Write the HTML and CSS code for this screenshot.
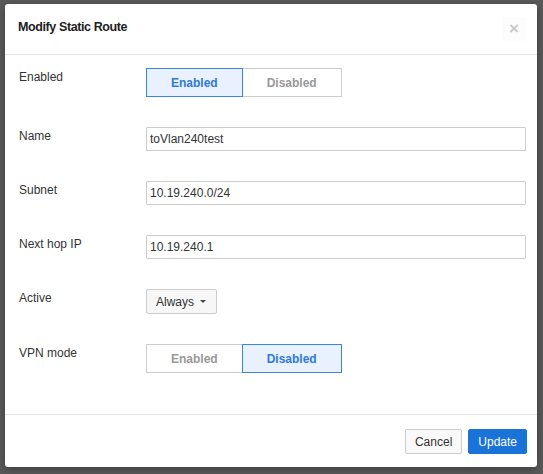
FILE: index.html
```html
<!DOCTYPE html>
<html lang="en">
<head>
    <meta charset="UTF-8">
    <meta name="viewport" content="width=device-width, initial-scale=1.0">
    <title>Modify Static Route</title>
    <link rel="stylesheet" href="styles.css">
</head>
<body>

<div class="modal">
    <div class="modal-header">
        <h4 class="modal-title">Modify Static Route</h4>
        <button class="close">&times;</button>
    </div>

    <div class="modal-body">
        <!-- Enabled -->
        <div class="form-row">
            <label class="form-label">Enabled</label>
            <div class="toggle-group">
                <button class="toggle active">Enabled</button>
                <button class="toggle">Disabled</button>
            </div>
        </div>

        <div class="form-row">
            <label class="form-label">Name</label>
            <input class="form-input" type="text" value="toVlan240test">
        </div>

        <div class="form-row">
            <label class="form-label">Subnet</label>
            <input class="form-input" type="text" value="10.19.240.0/24">
        </div>

        <div class="form-row">
            <label class="form-label">Next hop IP</label>
            <input class="form-input" type="text" value="10.19.240.1">
        </div>

        <div class="form-row">
            <label class="form-label">Active</label>
            <button class="dropdown">Always <span class="caret"></span></button>
        </div>

        <!-- VPN mode -->
        <div class="form-row">
            <label class="form-label">VPN mode</label>
            <div class="toggle-group">
                <button class="toggle">Enabled</button>
                <button class="toggle active">Disabled</button>
            </div>
        </div>
    </div>

    <div class="modal-footer">
        <button class="btn">Cancel</button>
        <button class="btn btn-primary">Update</button>
    </div>
</div>

</body>
</html>
```

FILE: styles.css
```css
body {
    margin: 0;
    padding: 0;
    background-color: #5a5a5a;
    font-family: 'Liberation Sans', Arial, sans-serif;
    color: #333;
    height: 474px;
    overflow: hidden;
}
.modal {
    margin: 4px 0 0 5px;
    width: 532px;
    height: 463px;
    background-color: #fff;
    border-radius: 3px;
    box-shadow: 0 2px 8px rgba(0, 0, 0, 0.35);
}
.modal-header {
    height: 51px;
    box-sizing: border-box;
    border-bottom: 1px solid #e4e4e4;
    display: flex;
    justify-content: space-between;
    align-items: flex-start;
    padding: 0 11px 0 13px;
}
.modal-title {
    margin: 0;
    padding-top: 16px;
    font-family: 'Liberation Sans', sans-serif;
    font-size: 12.5px;
    font-weight: 700;
    letter-spacing: -0.4px;
    color: #222;
}
.close {
    margin-top: 13px;
    width: 24px;
    height: 24px;
    border: none;
    border-radius: 2px;
    background-color: #fcfcfc;
    color: #c8c8c8;
    font-size: 17px;
    font-weight: 700;
    line-height: 24px;
    padding: 0;
    font-family: 'Liberation Sans', sans-serif;
}
.modal-body {
    height: 360px;
    box-sizing: border-box;
    display: flex;
    flex-direction: column;
    gap: 30px;
    padding: 13px 11px 0 14px;
    border-bottom: 1px solid #e4e4e4;
}
.form-row {
    display: flex;
    align-items: flex-start;
}
.form-label {
    width: 127px;
    flex-shrink: 0;
    font-size: 12px;
    line-height: 18px;
    color: #333;
}
.form-input {
    flex: 1;
    height: 24px;
    box-sizing: border-box;
    border: 1px solid #ccc;
    border-radius: 1px;
    padding: 0 3px;
    font-family: 'Liberation Sans', sans-serif;
    font-size: 12px;
    color: #333;
    outline: none;
}
.toggle-group {
    display: flex;
}
.toggle {
    height: 29px;
    box-sizing: border-box;
    border: 1px solid #ccc;
    background-color: #fff;
    color: #999;
    font-family: 'Liberation Sans', sans-serif;
    font-size: 12px;
    font-weight: 700;
    padding: 0 24px;
}
.toggle + .toggle {
    margin-left: -1px;
}
.toggle.active {
    border-color: #3d86e0;
    background-color: #e8f1fd;
    color: #2f7ad8;
    position: relative;
}
.dropdown {
    height: 25px;
    box-sizing: border-box;
    border: 1px solid #ccc;
    border-radius: 2px;
    background-color: #f7f7f7;
    font-family: 'Liberation Sans', sans-serif;
    font-size: 12px;
    color: #333;
    padding: 0 10px 0 9px;
    display: flex;
    align-items: center;
    gap: 6px;
}
.caret {
    width: 0;
    height: 0;
    border-left: 3px solid transparent;
    border-right: 3px solid transparent;
    border-top: 3px solid #444;
}
.modal-footer {
    display: flex;
    justify-content: flex-end;
    gap: 6px;
    padding: 14px 10px 0 0;
}
.btn {
    height: 25px;
    box-sizing: border-box;
    border: 1px solid #ccc;
    border-radius: 2px;
    background-color: #f9f9f9;
    font-family: 'Liberation Sans', sans-serif;
    font-size: 12px;
    color: #333;
    padding: 0 9px;
}
.btn-primary {
    background-color: #1a73d6;
    border-color: #1a73d6;
    color: #fff;
    padding: 0 9px;
}
```
